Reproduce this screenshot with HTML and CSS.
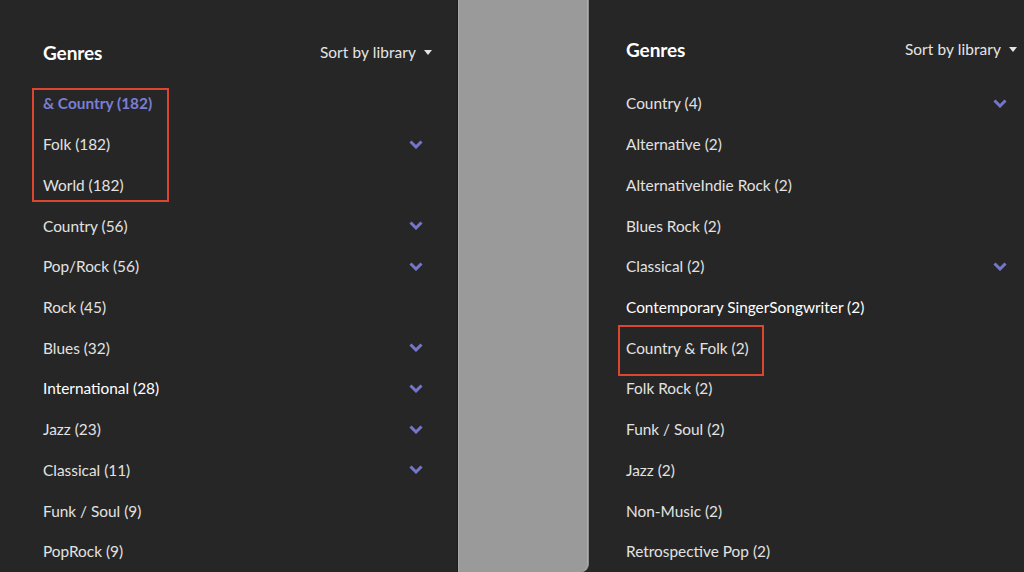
FILE: index.html
```html
<!DOCTYPE html>
<html>
<head>
<meta charset="utf-8">
<link rel="stylesheet" href="styles.css">
</head>
<body>
<div class="screen">
  <section class="panel panel-left">
    <div class="head">
      <h2 class="title">Genres</h2>
      <div class="sort">Sort by library <span class="tri"></span></div>
    </div>
    <ul class="list">
      <li class="row active"><span>&amp; Country (182)</span></li>
      <li class="row"><span>Folk (182)</span><svg class="chev" viewBox="0 0 14 9"><polyline points="1.5,1.5 7,7 12.5,1.5"/></svg></li>
      <li class="row"><span>World (182)</span></li>
      <li class="row"><span>Country (56)</span><svg class="chev" viewBox="0 0 14 9"><polyline points="1.5,1.5 7,7 12.5,1.5"/></svg></li>
      <li class="row"><span>Pop/Rock (56)</span><svg class="chev" viewBox="0 0 14 9"><polyline points="1.5,1.5 7,7 12.5,1.5"/></svg></li>
      <li class="row"><span>Rock (45)</span></li>
      <li class="row"><span>Blues (32)</span><svg class="chev" viewBox="0 0 14 9"><polyline points="1.5,1.5 7,7 12.5,1.5"/></svg></li>
      <li class="row bright"><span>International (28)</span><svg class="chev" viewBox="0 0 14 9"><polyline points="1.5,1.5 7,7 12.5,1.5"/></svg></li>
      <li class="row"><span>Jazz (23)</span><svg class="chev" viewBox="0 0 14 9"><polyline points="1.5,1.5 7,7 12.5,1.5"/></svg></li>
      <li class="row"><span>Classical (11)</span><svg class="chev" viewBox="0 0 14 9"><polyline points="1.5,1.5 7,7 12.5,1.5"/></svg></li>
      <li class="row"><span>Funk / Soul (9)</span></li>
      <li class="row"><span>PopRock (9)</span></li>
    </ul>
    <div class="mark mark-left"></div>
  </section>
  <div class="gap"></div>
  <section class="panel panel-right">
    <div class="head">
      <h2 class="title">Genres</h2>
      <div class="sort">Sort by library <span class="tri"></span></div>
    </div>
    <ul class="list">
      <li class="row"><span>Country (4)</span><svg class="chev" viewBox="0 0 14 9"><polyline points="1.5,1.5 7,7 12.5,1.5"/></svg></li>
      <li class="row"><span>Alternative (2)</span></li>
      <li class="row"><span>AlternativeIndie Rock (2)</span></li>
      <li class="row"><span>Blues Rock (2)</span></li>
      <li class="row"><span>Classical (2)</span><svg class="chev" viewBox="0 0 14 9"><polyline points="1.5,1.5 7,7 12.5,1.5"/></svg></li>
      <li class="row bright"><span>Contemporary SingerSongwriter (2)</span></li>
      <li class="row"><span>Country &amp; Folk (2)</span></li>
      <li class="row"><span>Folk Rock (2)</span></li>
      <li class="row"><span>Funk / Soul (2)</span></li>
      <li class="row"><span>Jazz (2)</span></li>
      <li class="row"><span>Non-Music (2)</span></li>
      <li class="row"><span>Retrospective Pop (2)</span></li>
    </ul>
    <div class="mark mark-right"></div>
  </section>
</div>
</body>
</html>
```
FILE: styles.css
```css
* { box-sizing: border-box; }
html, body {
  margin: 0;
  padding: 0;
  width: 1024px;
  height: 572px;
  overflow: hidden;
  background: #262626;
  font-family: Lato, "Open Sans", sans-serif;
}
.screen {
  display: flex;
  height: 572px;
}
.panel {
  position: relative;
  background: #262626;
  height: 572px;
  overflow: hidden;
}
.panel-left {
  width: 458px;
  padding: 0 25px 0 43px;
  border-right: 1px solid #1c1c1c;
}
.panel-right {
  flex: 1;
  padding: 0 7px 0 37px;
}
.gap {
  width: 131px;
  background: #9a9a9a;
  border-left: 1px solid #a9a9a9;
  border-right: 1px solid #8e8e8e;
  border-bottom-right-radius: 8px;
  box-shadow: inset -1px 0 0 #adadad;
}
.head {
  display: flex;
  justify-content: space-between;
  align-items: center;
  height: 24px;
}
.panel-left .head { margin-top: 40px; }
.panel-right .head { margin-top: 37px; }
.title {
  margin: 0;
  font-size: 19px;
  font-weight: 700;
  color: #ffffff;
  letter-spacing: -0.1px;
}
.sort {
  font-size: 15.4px;
  color: #e4e4e4;
  display: flex;
  align-items: center;
  letter-spacing: 0.1px;
}
.tri {
  display: inline-block;
  width: 0;
  height: 0;
  margin-left: 8px;
  border-left: 4.5px solid transparent;
  border-right: 4.5px solid transparent;
  border-top: 5px solid #e4e4e4;
}
.list {
  list-style: none;
  margin: 0;
  padding: 0;
}
.panel-left .list { margin-top: 19px; padding-right: 9px; }
.panel-right .list { margin-top: 22px; padding-right: 10px; }
.row {
  height: 40.73px;
  display: flex;
  align-items: center;
  justify-content: space-between;
  font-size: 15.4px;
  color: #e2e2e2;
}
.row.bright { color: #ffffff; }
.row.active { color: #7b7ed6; font-weight: 700; }
.chev {
  width: 14px;
  height: 9px;
  fill: none;
  stroke: #7476cc;
  stroke-width: 3;
  stroke-linecap: butt;
  stroke-linejoin: miter;
}
.mark {
  position: absolute;
  border: 2.5px solid #dc4530;
}
.mark-left {
  left: 32px;
  top: 88px;
  width: 137px;
  height: 114px;
}
.mark-right {
  left: 29px;
  top: 325px;
  width: 146px;
  height: 51px;
}
```
